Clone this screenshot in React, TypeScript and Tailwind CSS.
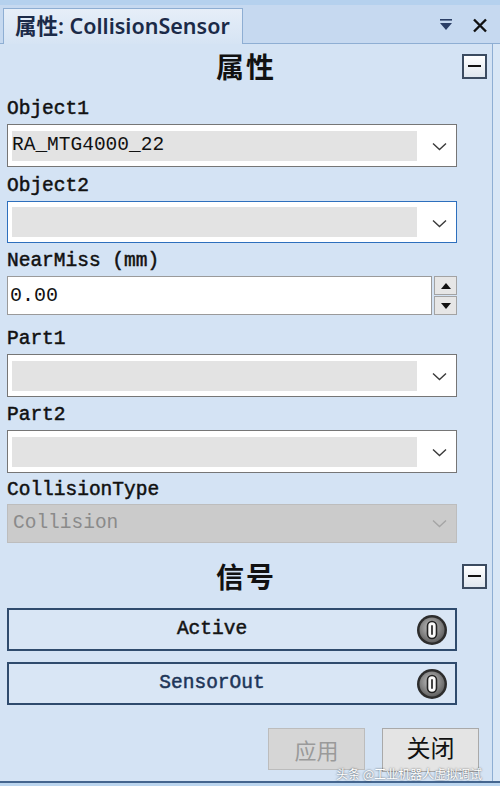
import React from 'react';

const mono = "font-['Liberation_Mono','Noto_Sans_CJK_SC',monospace]";
const cjk = "font-['Noto_Sans_CJK_SC','Noto_Sans',sans-serif]";

const Chevron = ({ color = '#3a3a3a' }: { color?: string }) => (
  <svg width="15" height="9" viewBox="0 0 15 9">
    <polyline points="1,1.5 7.5,7.5 14,1.5" fill="none" stroke={color} strokeWidth="1.4" />
  </svg>
);

const MinusBox = () => (
  <div className="w-[25px] h-[25px] border-2 border-[#3b4b60] bg-gradient-to-b from-[#ffffff] to-[#dfe6ee] flex items-center justify-center">
    <div className="w-[13px] h-[2px] bg-[#111]" />
  </div>
);

const SignalIcon = ({ id }: { id: string }) => (
  <svg width="32" height="32" viewBox="0 0 32 32">
    <defs>
      <radialGradient id={id} cx="45%" cy="40%" r="60%">
        <stop offset="0%" stopColor="#c4c4c4" />
        <stop offset="100%" stopColor="#626262" />
      </radialGradient>
    </defs>
    <circle cx="16" cy="16" r="15" fill="#2c2c2c" />
    <circle cx="16" cy="16" r="12.5" fill={`url(#${id})`} />
    <rect x="11.5" y="7.5" width="9" height="17" rx="4.5" fill="#fafafa" stroke="#222" strokeWidth="1.6" />
    <rect x="15" y="11" width="2" height="10" rx="1" fill="#444" />
  </svg>
);

interface ComboProps {
  value?: string;
  focused?: boolean;
  h?: string;
}

const Combo = ({ value, focused, h = 'h-[43px]' }: ComboProps) => (
  <div
    className={`${h} w-[450px] bg-white border flex items-center pl-[4px] ${
      focused ? 'border-[#2d6fbd]' : 'border-[#767676]'
    }`}
  >
    <div className={`w-[405px] h-[30px] bg-[#e3e3e3] flex items-center text-[19.5px] text-[#111] ${mono}`}>
      {value}
    </div>
    <div className="flex-1 flex justify-center pl-[6px] pt-[2px]">
      <Chevron />
    </div>
  </div>
);

const Label = ({ text, mt }: { text: string; mt: string }) => (
  <div
    className={`${mt} h-[24px] leading-[24px] text-[19.5px] text-[#111] whitespace-pre [-webkit-text-stroke:0.5px_#111] ${mono}`}
  >
    {text}
  </div>
);

const SignalButton = ({ text, color, mt, id }: { text: string; color: string; mt: string; id: string }) => (
  <div className={`${mt} w-[450px] h-[43px] border-2 border-[#2f4b6d] bg-[#d9e6f5] flex items-center`}>
    <div className={`flex-1 text-center text-[19.5px] [-webkit-text-stroke:0.5px_currentColor] ${color} ${mono}`}>
      {text}
    </div>
    <div className="w-[40px] flex justify-start pl-[1px]">
      <SignalIcon id={id} />
    </div>
  </div>
);

export default function App() {
  return (
    <div className="w-[500px] h-[786px] bg-[#d4e3f4] flex flex-col overflow-hidden relative">
      <div className="h-[5px] bg-[#b5d1ee]" />
      <div className="h-[39px] bg-[#c6d9f0] border-b border-[#8eaed3] flex items-end">
        <div
          className={`ml-[3px] -mb-px w-[240px] h-[36px] bg-gradient-to-b from-[#e6eef8] to-[#d6e4f4] border border-b-0 border-[#8eaed3] flex items-center pl-[11px] text-[21.5px] font-semibold text-[#1b2a48] font-['Noto_Sans','Noto_Sans_CJK_SC',sans-serif]`}
        >
          属性: CollisionSensor
        </div>
        <div className="ml-auto self-center mr-[12px] flex items-center gap-[19px] mt-[2px]">
          <svg width="14" height="12" viewBox="0 0 14 12">
            <rect x="1" y="0" width="12" height="1.6" fill="#2b3f66" />
            <polygon points="1,4 13,4 7,11" fill="#2b3f66" />
          </svg>
          <svg width="16" height="15" viewBox="0 0 16 15">
            <path d="M2 1.5 L14 13.5 M14 1.5 L2 13.5" stroke="#111" strokeWidth="2.4" />
          </svg>
        </div>
      </div>

      <div className="flex flex-1">
        <div className="w-[493px] border-r border-[#8eaed3] flex flex-col">
          <div className="h-[44px] flex items-center">
            <div className="w-[30px]" />
            <div className={`flex-1 text-center text-[28px] font-bold tracking-[2px] text-[#111] ${cjk}`}>属性</div>
            <div className="mr-[5px]">
              <MinusBox />
            </div>
          </div>

          <div className="pl-[7px] flex flex-col">
            <Label text="Object1" mt="mt-[9px]" />
            <div className="mt-[3px]">
              <Combo value="RA_MTG4000_22" />
            </div>

            <Label text="Object2" mt="mt-[7px]" />
            <div className="mt-[3px]">
              <Combo focused h="h-[42px]" />
            </div>

            <Label text="NearMiss (mm)" mt="mt-[6px]" />
            <div className="mt-[3px] w-[450px] h-[39px] flex items-stretch gap-[2px]">
              <div className={`flex-1 bg-white border border-[#9a9a9a] flex items-center pl-[2px] text-[20px] text-[#111] ${mono}`}>
                0.00
              </div>
              <div className="w-[23px] flex flex-col gap-[1px]">
                <div className="flex-1 bg-[#e6e6e6] border border-[#a3a3a3] flex items-center justify-center">
                  <svg width="10" height="6" viewBox="0 0 10 6">
                    <polygon points="0,6 10,6 5,0" fill="#111" />
                  </svg>
                </div>
                <div className="flex-1 bg-[#e6e6e6] border border-[#a3a3a3] flex items-center justify-center">
                  <svg width="10" height="6" viewBox="0 0 10 6">
                    <polygon points="0,0 10,0 5,6" fill="#111" />
                  </svg>
                </div>
              </div>
            </div>

            <Label text="Part1" mt="mt-[12px]" />
            <div className="mt-[3px]">
              <Combo />
            </div>

            <Label text="Part2" mt="mt-[6px]" />
            <div className="mt-[3px]">
              <Combo />
            </div>

            <Label text="CollisionType" mt="mt-[5px]" />
            <div className="mt-[2px] w-[450px] h-[39px] bg-[#cbcbcb] border border-[#bdbdbd] flex items-center pl-[5px]">
              <div className={`flex-1 text-[19.5px] text-[#8a8a8a] ${mono}`}>Collision</div>
              <div className="w-[40px] flex justify-center pl-[6px]">
                <Chevron color="#a5a5a5" />
              </div>
            </div>
          </div>

          <div className="mt-[11px] h-[44px] flex items-center">
            <div className="w-[30px]" />
            <div className={`flex-1 text-center text-[28px] font-bold tracking-[2px] text-[#111] ${cjk}`}>信号</div>
            <div className="mr-[5px]">
              <MinusBox />
            </div>
          </div>

          <div className="pl-[7px] flex flex-col">
            <SignalButton text="Active" color="text-[#141414]" mt="mt-[10px]" id="g1" />
            <SignalButton text="SensorOut" color="text-[#1d3558]" mt="mt-[11px]" id="g2" />
          </div>

          <div className="mt-[23px] flex justify-end items-start gap-[17px] pr-[13px]">
            <div className="w-[97px] h-[42px] bg-[#d6d6d6] border border-[#bcbcbc] flex items-center justify-center">
              <span className={`text-[22px] leading-none text-[#9a9a9a] ${cjk}`}>应用</span>
            </div>
            <div className="w-[97px] h-[44px] bg-[#e4e4e4] border border-[#a9a9a9] flex items-start justify-center pt-[6px]">
              <span className={`text-[24px] leading-none text-[#111] ${cjk}`}>关闭</span>
            </div>
          </div>
        </div>
        <div className="flex-1 bg-[#d9e7f6]" />
      </div>
      <div className="h-[2px] bg-[#45668f]" />
      <div className="h-[3px] bg-[#bcd6ef]" />

      <div
        className={`absolute left-[336px] top-[768px] text-[12px] leading-none text-white [text-shadow:0_0_2px_rgba(0,0,0,0.7)] ${cjk}`}
      >
        头条 @工业机器人虚拟调试
      </div>
    </div>
  );
}
